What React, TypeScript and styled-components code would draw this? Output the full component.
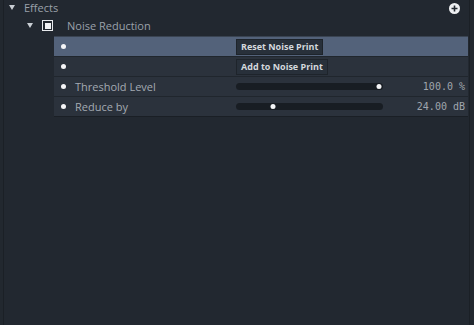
import React from "react";
import styled, { createGlobalStyle } from "styled-components";

const Global = createGlobalStyle`
  html, body { margin: 0; padding: 0; background: #22282f; }
  body { width: 474px; height: 325px; overflow: hidden; font-family: "Open Sans", "Noto Sans", sans-serif; }
`;

const Panel = styled.div`
  box-sizing: border-box;
  height: 325px;
  background: #222830;
  border-left: 1px solid #1b2026;
  border-right: 1px solid #1b2026;
  margin-left: 3px;
  width: 467px;
  display: flex;
  flex-direction: column;
`;

const Header = styled.div<{ $indent: number; $h: number }>`
  display: flex;
  align-items: center;
  height: ${(p) => p.$h}px;
  padding-left: ${(p) => p.$indent}px;
  color: #9aa1aa;
  font-size: 11px;
`;

const Caret = styled.span`
  width: 0;
  height: 0;
  border-left: 3px solid transparent;
  border-right: 3px solid transparent;
  border-top: 5px solid #c9ced4;
  margin-right: 9px;
`;

const Check = styled.span`
  box-sizing: border-box;
  width: 11px;
  height: 11px;
  border: 1.5px solid #e8eaed;
  background: #22282f;
  display: flex;
  align-items: center;
  justify-content: center;
  margin-right: 14px;
  &::after {
    content: "";
    width: 6px;
    height: 6px;
    background: #f2f3f5;
  }
`;

const Title = styled.span`
  flex: 1;
`;

const Plus = styled.svg`
  margin-right: 9px;
  margin-top: 1px;
`;

const Rows = styled.div`
  margin-left: 50px;
  margin-right: 1px;
  display: flex;
  flex-direction: column;
  border-bottom: 1px solid #1a1f25;
`;

const Row = styled.div<{ $active?: boolean }>`
  display: grid;
  grid-template-columns: 182px 147px 1fr;
  align-items: center;
  height: 19px;
  background: ${(p) => (p.$active ? "#53627a" : "#2b323c")};
  border-top: 1px solid ${(p) => (p.$active ? "#3a4452" : "#20262d")};
  color: #a4aab2;
  font-size: 11px;
`;

const Label = styled.div`
  display: flex;
  align-items: center;
  padding-left: 7px;
  &::before {
    content: "";
    width: 5px;
    height: 5px;
    border-radius: 50%;
    background: #f4f5f7;
    margin-right: 9px;
  }
`;

const Button = styled.div`
  justify-self: start;
  box-sizing: border-box;
  height: 16px;
  padding: 0 4px;
  display: flex;
  align-items: center;
  background: #28303a;
  border: 1px solid #1e242b;
  color: #d4d8dd;
  font-weight: 700;
  font-size: 9px;
  white-space: nowrap;
`;

const Track = styled.div`
  position: relative;
  height: 7px;
  border-radius: 4px;
  background: #181d23;
`;

const Knob = styled.span`
  position: absolute;
  top: 1px;
  width: 5px;
  height: 5px;
  border-radius: 50%;
  background: #f4f5f7;
  transform: translateX(-50%);
`;

const Value = styled.div`
  text-align: right;
  padding-right: 3px;
  font-family: "DejaVu Sans Mono", "Liberation Mono", monospace;
  font-size: 10px;
  color: #a0a6ae;
`;

export default function App() {
  return (
    <>
      <Global />
      <Panel>
        <Header $indent={5} $h={15}>
          <Caret />
          <Title>Effects</Title>
          <Plus width="11" height="11" viewBox="0 0 11 11">
            <circle cx="5.5" cy="5.5" r="5.5" fill="#eef0f2" />
            <path d="M5.5 2.5v6M2.5 5.5h6" stroke="#222830" strokeWidth="1.6" />
          </Plus>
        </Header>
        <Header $indent={23} $h={21}>
          <Caret />
          <Check />
          <Title>Noise Reduction</Title>
        </Header>
        <Rows>
          <Row $active>
            <Label />
            <Button>Reset Noise Print</Button>
          </Row>
          <Row>
            <Label />
            <Button>Add to Noise Print</Button>
          </Row>
          <Row>
            <Label>Threshold Level</Label>
            <Track>
              <Knob style={{ left: "97%" }} />
            </Track>
            <Value>100.0 %</Value>
          </Row>
          <Row>
            <Label>Reduce by</Label>
            <Track>
              <Knob style={{ left: "25%" }} />
            </Track>
            <Value>24.00 dB</Value>
          </Row>
        </Rows>
      </Panel>
    </>
  );
}
